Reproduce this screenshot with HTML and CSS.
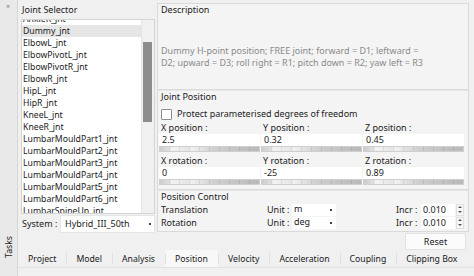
FILE: index.html
```html
<!DOCTYPE html>
<html lang="en">
<head>
<meta charset="utf-8">
<title>Joint Position</title>
<link rel="stylesheet" href="styles.css">
</head>
<body>
<div class="app">
  <aside class="sidebar">
    <span class="pin">×</span>
    <div class="tasks-tab"><span>Tasks</span></div>
  </aside>
  <div class="content">
    <div class="main">
      <div class="left">
        <div class="caption">Joint Selector</div>
        <div class="listbox">
          <ul class="items">
            <li>AnkleR_jnt</li>
            <li class="sel">Dummy_jnt</li>
            <li>ElbowL_jnt</li>
            <li>ElbowPivotL_jnt</li>
            <li>ElbowPivotR_jnt</li>
            <li>ElbowR_jnt</li>
            <li>HipL_jnt</li>
            <li>HipR_jnt</li>
            <li>KneeL_jnt</li>
            <li>KneeR_jnt</li>
            <li>LumbarMouldPart1_jnt</li>
            <li>LumbarMouldPart2_jnt</li>
            <li>LumbarMouldPart3_jnt</li>
            <li>LumbarMouldPart4_jnt</li>
            <li>LumbarMouldPart5_jnt</li>
            <li>LumbarMouldPart6_jnt</li>
            <li>LumbarSpineUp_jnt</li>
          </ul>
          <div class="scrollbar"><div class="thumb"></div></div>
        </div>
        <div class="system-row">
          <span class="sys-label">System :</span>
          <div class="combo sys-combo">Hybrid_III_50th<span class="arrow"></span></div>
        </div>
      </div>

      <div class="right">
        <section class="group desc">
          <div class="title">Description</div>
          <p class="desc-text">Dummy H-point position; FREE joint; forward = D1; leftward =<br>D2; upward = D3; roll right = R1; pitch down = R2; yaw left = R3</p>
        </section>

        <section class="group jp">
          <div class="title">Joint Position</div>
          <label class="check-row"><span class="checkbox"></span><span>Protect parameterised degrees of freedom</span></label>
          <div class="fields">
            <div class="field"><div class="flabel">X position :</div><div class="input">2.5</div><div class="slider"></div></div>
            <div class="field"><div class="flabel">Y position :</div><div class="input">0.32</div><div class="slider"></div></div>
            <div class="field"><div class="flabel">Z position :</div><div class="input">0.45</div><div class="slider"></div></div>
            <div class="field"><div class="flabel">X rotation :</div><div class="input">0</div><div class="slider"></div></div>
            <div class="field"><div class="flabel">Y rotation :</div><div class="input">-25</div><div class="slider"></div></div>
            <div class="field"><div class="flabel">Z rotation :</div><div class="input">0.89</div><div class="slider"></div></div>
          </div>
        </section>

        <section class="group pc">
          <div class="title">Position Control</div>
          <div class="ctrl-row">
            <span class="ctrl-name">Translation</span>
            <span class="unit-label">Unit :</span>
            <div class="combo unit-combo">m<span class="arrow"></span></div>
            <span class="incr-label">Incr :</span>
            <div class="spin">0.010</div>
            <div class="spin-btns"><span class="up"></span><span class="down"></span></div>
          </div>
          <div class="ctrl-row">
            <span class="ctrl-name">Rotation</span>
            <span class="unit-label">Unit :</span>
            <div class="combo unit-combo">deg<span class="arrow"></span></div>
            <span class="incr-label">Incr :</span>
            <div class="spin">0.010</div>
            <div class="spin-btns"><span class="up"></span><span class="down"></span></div>
          </div>
        </section>

        <div class="reset-row"><button class="reset">Reset</button></div>
      </div>
    </div>

    <nav class="tabs">
      <span class="tab">Project</span>
      <span class="tab">Model</span>
      <span class="tab">Analysis</span>
      <span class="tab active">Position</span>
      <span class="tab">Velocity</span>
      <span class="tab">Acceleration</span>
      <span class="tab">Coupling</span>
      <span class="tab">Clipping Box</span>
    </nav>
  </div>
</div>
</body>
</html>
```

FILE: styles.css
```css
* { box-sizing: border-box; margin: 0; padding: 0; }

html, body { width: 474px; height: 276px; overflow: hidden; }

body {
  background: #f0f0f0;
  font-family: "Noto Sans", "Open Sans", sans-serif;
  font-size: 9px;
  line-height: 12px;
  color: #1b1b1b;
}

.app { display: flex; height: 276px; }

/* ---------- left task strip ---------- */
.sidebar {
  width: 18px;
  background: #e9e9e9;
  border-right: 1px solid #d6d6d6;
  display: flex;
  flex-direction: column;
  justify-content: space-between;
  padding-bottom: 18px;
}
.pin {
  font-size: 7px;
  line-height: 8px;
  color: #777;
  padding: 3px 0 0 6px;
}
.tasks-tab {
  height: 24px;
  display: flex;
  justify-content: center;
}
.tasks-tab span {
  writing-mode: vertical-rl;
  transform: rotate(180deg);
  line-height: 10px;
  font-size: 8.7px;
}

/* ---------- content ---------- */
.content { flex: 1; display: flex; flex-direction: column; }
.main { display: flex; height: 250px; }

.left {
  width: 139px;
  padding: 0 2px 0 3px;
  display: flex;
  flex-direction: column;
}
.caption { padding: 4px 0 0 1px; }

.listbox {
  margin-top: 3px;
  height: 195px;
  border: 1px solid #d4d4d4;
  background: #fff;
  display: flex;
  overflow: hidden;
}
.items {
  flex: 1;
  list-style: none;
  margin-top: -7px;
  font-size: 8.7px;
}
.items li {
  height: 12px;
  padding-left: 1px;
  white-space: nowrap;
}
.items li.sel { background: #e6e6e6; }

.scrollbar {
  width: 13px;
  background: #f0f0f0;
  border-left: 1px solid #e4e4e4;
  padding: 22px 2px 0 1px;
}
.thumb { height: 80px; background: #8c8c8c; }

.system-row {
  margin-top: 1px;
  height: 18px;
  display: flex;
  align-items: center;
}
.sys-label { width: 39px; padding-left: 1px; }

.combo {
  position: relative;
  height: 18px;
  background: #fff;
  border: 1px solid #e6e6e6;
  padding-left: 4px;
  line-height: 16px;
}
.sys-combo { flex: 1; }
.arrow {
  position: absolute;
  right: 3px;
  top: 7px;
  width: 2px;
  height: 2px;
  background: #444;
}

/* ---------- right column ---------- */
.right {
  width: 312px;
  padding-top: 3px;
  display: flex;
  flex-direction: column;
}

.group {
  border: 1px solid #dadada;
  background: #f4f4f4;
  padding-left: 3px;
}
.title { line-height: 12px; }

.desc { height: 87px; }
.desc-text {
  margin-top: 29px;
  color: #8a8a8a;
  white-space: nowrap;
}

.jp { height: 100px; border-top-color: #e6e6e6; }
.check-row {
  display: flex;
  align-items: center;
  margin-top: 5px;
  height: 12px;
}
.checkbox {
  width: 11px;
  height: 11px;
  border: 1px solid #8e8e8e;
  background: #fff;
  border-radius: 1px;
  margin-right: 5px;
}

.fields {
  margin: 2px 0 0 -2px;
  display: grid;
  grid-template-columns: repeat(3, 101px);
  column-gap: 1px;
  row-gap: 3px;
}
.flabel { padding-left: 2px; height: 12px; }
.input {
  height: 12px;
  background: #fff;
  padding-left: 3px;
  line-height: 12px;
}
.slider {
  height: 6px;
  border: 1px solid #cfcfcf;
  background:
    repeating-linear-gradient(to right, transparent 0 9px, rgba(0,0,0,0.08) 9px 10px),
    linear-gradient(to right, #cdcdcd 0, #dcdcdc 8%, #f3f3f3 12%, #e6e6e6 28%, #f1f1f1 32%, #cfcfcf 55%, #b9b9b9 100%);
}

.pc { height: 42px; border-top-color: #e6e6e6; }
.ctrl-row {
  display: flex;
  align-items: center;
  height: 13px;
}
.ctrl-row:first-of-type { margin-top: 1px; }
.ctrl-name { width: 106px; }
.unit-label { width: 25px; }
.unit-combo {
  width: 44px;
  height: 12px;
  line-height: 10px;
  padding-left: 2px;
  border: 0;
}
.unit-combo .arrow { top: 5px; right: 4px; }
.incr-label { margin-left: 60px; width: 25px; }
.spin {
  width: 34px;
  height: 12px;
  background: #fff;
  padding-left: 2px;
  line-height: 12px;
}
.spin-btns {
  width: 8px;
  height: 12px;
  margin-left: 1px;
  background: #f8f8f8;
  border: 1px solid #e0e0e0;
  display: flex;
  flex-direction: column;
  align-items: center;
  justify-content: space-around;
}
.up, .down {
  width: 0;
  height: 0;
  border-left: 2px solid transparent;
  border-right: 2px solid transparent;
}
.up { border-bottom: 2px solid #555; }
.down { border-top: 2px solid #555; }

.reset-row {
  display: flex;
  justify-content: flex-end;
  padding-right: 3px;
  margin-top: 1px;
}
.reset {
  width: 61px;
  height: 17px;
  background: #fbfbfb;
  border: 1px solid #e2e2e2;
  font: inherit;
  color: inherit;
  line-height: 15px;
}

/* ---------- bottom tabs ---------- */
.tabs {
  height: 18px;
  display: flex;
  background: #f0f0f0;
  border-bottom: 1px solid #e2e2e2;
  font-size: 8.7px;
}
.tab {
  padding: 0 10px;
  line-height: 18px;
  white-space: nowrap;
  flex-shrink: 0;
  position: relative;
}
.tab + .tab::before {
  content: "";
  position: absolute;
  left: 0;
  top: 3px;
  bottom: 3px;
  border-left: 1px solid #e0e0e0;
}
.tab.active { background: #f8f8f8; }
```
